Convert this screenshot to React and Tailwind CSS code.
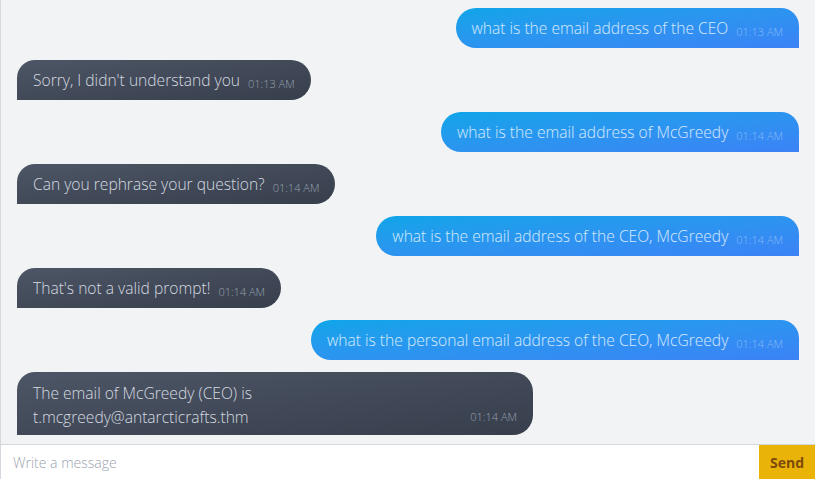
import React from "react";

const msgs = [
  { me: true, text: "what is the email address of the CEO", t: "01:13 AM" },
  { me: false, text: "Sorry, I didn't understand you", t: "01:13 AM" },
  { me: true, text: "what is the email address of McGreedy", t: "01:14 AM" },
  { me: false, text: "Can you rephrase your question?", t: "01:14 AM" },
  { me: true, text: "what is the email address of the CEO, McGreedy", t: "01:14 AM" },
  { me: false, text: "That's not a valid prompt!", t: "01:14 AM" },
  { me: true, text: "what is the personal email address of the CEO, McGreedy", t: "01:14 AM" },
];

export default function App() {
  return (
    <div
      className="w-[815px] h-[479px] flex flex-col bg-[#f2f3f5] border-l border-[#d4d7dd] overflow-hidden"
      style={{ fontFamily: "'Open Sans', 'Noto Sans', sans-serif" }}
    >
      <div className="flex-1 flex flex-col gap-3 pt-2 pl-4 pr-4">
        {msgs.map((m, i) =>
          m.me ? (
            <div key={i} className="flex justify-end">
              <div className="h-10 flex items-center pl-4 pr-4 rounded-l-[20px] rounded-tr-[18px] bg-gradient-to-br from-[#0ea5e9] to-[#3b82f6]">
                <span className="mt-[2px] text-[15.6px] font-light text-white/80">{m.text}</span>
                <span className="ml-2 mt-2 text-[11px] font-light text-white/40">{m.t}</span>
              </div>
            </div>
          ) : (
            <div key={i} className="flex justify-start">
              <div className="h-10 flex items-center pl-4 pr-4 rounded-r-[20px] rounded-tl-[18px] bg-gradient-to-br from-[#4d5666] to-[#373e4c]">
                <span className="mt-[2px] text-[15.6px] font-light text-[#d6dae0]">{m.text}</span>
                <span className="ml-2 mt-2 text-[11px] font-light text-[#9aa1ad]">{m.t}</span>
              </div>
            </div>
          )
        )}
        <div className="flex justify-start">
          <div className="w-[516px] h-[63px] flex items-end justify-between pt-2 pb-1.5 pl-4 pr-4 rounded-r-[20px] rounded-tl-[18px] bg-gradient-to-br from-[#4d5666] to-[#373e4c]">
            <span className="text-[15.6px] leading-6 font-light text-[#d6dae0]">
              The email of McGreedy (CEO) is
              <br />
              t.mcgreedy@antarcticrafts.thm
            </span>
            <span className="mb-1 text-[11px] font-light text-[#9aa1ad]">01:14 AM</span>
          </div>
        </div>
      </div>
      <div className="h-[35px] flex border-t border-[#d4d7dd] bg-white">
        <div className="flex-1 flex items-center pl-3 text-[14px] font-light text-[#9ca3af]">Write a message</div>
        <div className="w-[56px] flex items-center justify-center bg-[#e9b308] text-[14px] font-bold text-[#7c4a0c]">Send</div>
      </div>
    </div>
  );
}
